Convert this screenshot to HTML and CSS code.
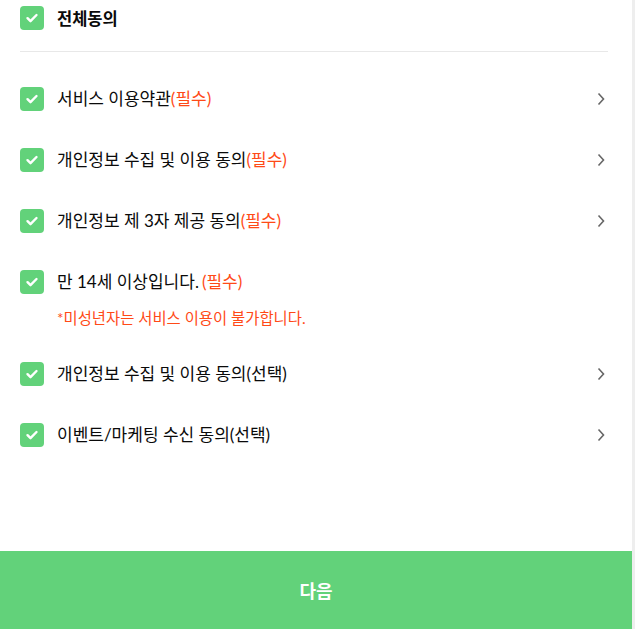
FILE: index.html
```html
<!DOCTYPE html>
<html lang="ko">
<head>
    <meta charset="UTF-8">
    <meta name="viewport" content="width=device-width, initial-scale=1.0">
    <title>약관 동의</title>
    <link rel="stylesheet" href="styles.css">
</head>
<body>
    <div class="page">
        <div class="terms">
            <label class="agree-all">
                <span class="check">
                    <svg viewBox="0 0 24 24" width="24" height="24"><path d="M7.5 12.2l3 3 6-6.2" fill="none" stroke="#fff" stroke-width="2.4" stroke-linecap="round" stroke-linejoin="round"/></svg>
                </span>
                <span class="agree-all-text">전체동의</span>
            </label>

            <div class="divider"></div>

            <ul class="term-list">
                <li class="term">
                    <div class="term-row">
                        <span class="check"><svg viewBox="0 0 24 24" width="24" height="24"><path d="M7.5 12.2l3 3 6-6.2" fill="none" stroke="#fff" stroke-width="2.4" stroke-linecap="round" stroke-linejoin="round"/></svg></span>
                        <span class="term-text">서비스 이용약관<em class="required">(필수)</em></span>
                        <svg class="arrow" viewBox="0 0 10 14" width="10" height="14"><path d="M2.5 1.5l5 5.5-5 5.5" fill="none" stroke="#666" stroke-width="1.6"/></svg>
                    </div>
                </li>
                <li class="term">
                    <div class="term-row">
                        <span class="check"><svg viewBox="0 0 24 24" width="24" height="24"><path d="M7.5 12.2l3 3 6-6.2" fill="none" stroke="#fff" stroke-width="2.4" stroke-linecap="round" stroke-linejoin="round"/></svg></span>
                        <span class="term-text">개인정보 수집 및 이용 동의<em class="required">(필수)</em></span>
                        <svg class="arrow" viewBox="0 0 10 14" width="10" height="14"><path d="M2.5 1.5l5 5.5-5 5.5" fill="none" stroke="#666" stroke-width="1.6"/></svg>
                    </div>
                </li>
                <li class="term">
                    <div class="term-row">
                        <span class="check"><svg viewBox="0 0 24 24" width="24" height="24"><path d="M7.5 12.2l3 3 6-6.2" fill="none" stroke="#fff" stroke-width="2.4" stroke-linecap="round" stroke-linejoin="round"/></svg></span>
                        <span class="term-text">개인정보 제 3자 제공 동의<em class="required">(필수)</em></span>
                        <svg class="arrow" viewBox="0 0 10 14" width="10" height="14"><path d="M2.5 1.5l5 5.5-5 5.5" fill="none" stroke="#666" stroke-width="1.6"/></svg>
                    </div>
                </li>
                <li class="term">
                    <div class="term-row">
                        <span class="check"><svg viewBox="0 0 24 24" width="24" height="24"><path d="M7.5 12.2l3 3 6-6.2" fill="none" stroke="#fff" stroke-width="2.4" stroke-linecap="round" stroke-linejoin="round"/></svg></span>
                        <span class="term-text">만 14세 이상입니다.<em class="required gap">(필수)</em></span>
                    </div>
                    <p class="note">*미성년자는 서비스 이용이 불가합니다.</p>
                </li>
                <li class="term">
                    <div class="term-row">
                        <span class="check"><svg viewBox="0 0 24 24" width="24" height="24"><path d="M7.5 12.2l3 3 6-6.2" fill="none" stroke="#fff" stroke-width="2.4" stroke-linecap="round" stroke-linejoin="round"/></svg></span>
                        <span class="term-text">개인정보 수집 및 이용 동의(선택)</span>
                        <svg class="arrow" viewBox="0 0 10 14" width="10" height="14"><path d="M2.5 1.5l5 5.5-5 5.5" fill="none" stroke="#666" stroke-width="1.6"/></svg>
                    </div>
                </li>
                <li class="term">
                    <div class="term-row">
                        <span class="check"><svg viewBox="0 0 24 24" width="24" height="24"><path d="M7.5 12.2l3 3 6-6.2" fill="none" stroke="#fff" stroke-width="2.4" stroke-linecap="round" stroke-linejoin="round"/></svg></span>
                        <span class="term-text">이벤트/마케팅 수신 동의(선택)</span>
                        <svg class="arrow" viewBox="0 0 10 14" width="10" height="14"><path d="M2.5 1.5l5 5.5-5 5.5" fill="none" stroke="#666" stroke-width="1.6"/></svg>
                    </div>
                </li>
            </ul>
        </div>

        <button type="button" class="next-btn">다음</button>
    </div>
</body>
</html>
```

FILE: styles.css
```css
html {
    background-color: #eeeeee;
}

body {
    font-family: Lato, 'Noto Sans CJK KR', sans-serif;
    margin: 0;
    padding: 0;
    color: #0a0a0a;
}

.page {
    width: calc(100% - 3px);
    height: 100vh;
    background-color: #fff;
    display: flex;
    flex-direction: column;
}

.terms {
    padding: 6px 24px 0 20px;
}

.agree-all {
    display: flex;
    align-items: center;
    gap: 13px;
    height: 24px;
}

.agree-all-text {
    font-size: 16.5px;
    font-weight: bold;
}

.check {
    width: 24px;
    height: 24px;
    flex: none;
    border-radius: 4px;
    background-color: #62d27a;
    display: flex;
}

.divider {
    height: 1px;
    background-color: #e8e8e8;
    margin-top: 21px;
}

.term-list {
    list-style: none;
    margin: 0;
    padding: 35px 0 0;
    display: flex;
    flex-direction: column;
    gap: 37px;
}

.term-row {
    display: flex;
    align-items: center;
    gap: 13px;
    height: 24px;
}

.term-text {
    flex: 1;
    font-size: 17px;
    line-height: 22px;
    white-space: nowrap;
}

.required {
    font-style: normal;
    color: #ff4a17;
}

.required.gap {
    margin-left: 3px;
}

.arrow {
    flex: none;
    margin-right: 2px;
}

.note {
    margin: 17px 0 0 37px;
    font-size: 15.4px;
    line-height: 14px;
    color: #ff4a17;
}

.next-btn {
    margin-top: auto;
    height: 78px;
    border: none;
    background-color: #62d27a;
    color: #fff;
    font-family: inherit;
    font-size: 18px;
    font-weight: bold;
}
```
